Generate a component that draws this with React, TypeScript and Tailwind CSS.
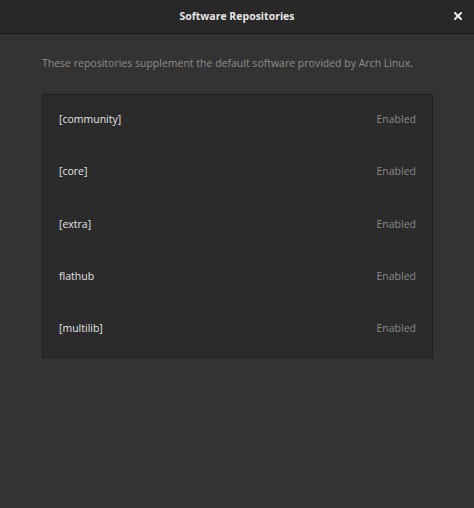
const repos = ["[community]", "[core]", "[extra]", "flathub", "[multilib]"]

export default function App() {
  return (
    <div
      className="w-[474px] h-[508px] bg-[#333333] flex flex-col"
      style={{ fontFamily: '"Open Sans", "Noto Sans", sans-serif' }}
    >
      <div className="h-[34px] shrink-0 bg-[#282828] border-b border-[#1a1a1a] flex items-center justify-center relative">
        <span className="text-[10.5px] font-bold text-[#e6e6e6]">Software Repositories</span>
        <svg className="absolute left-[454px] top-[12px]" width="8" height="8" viewBox="0 0 8 8">
          <path d="M1 1L7 7M7 1L1 7" stroke="#ececec" strokeWidth="2" strokeLinecap="square" />
        </svg>
      </div>
      <div className="px-[42px] pt-[21px]">
        <p className="text-[10.5px] leading-[16px] text-[#8e8e8e] whitespace-nowrap">
          These repositories supplement the default software provided by Arch Linux.
        </p>
        <div className="mt-[23px] w-[391px] bg-[#2b2b2b] border border-[#1f1f1f] flex flex-col">
          {repos.map((r) => (
            <div key={r} className="h-[52.4px] flex items-center justify-between pl-[16px] pr-[16px] pb-[3px]">
              <span className="text-[10.5px] text-[#e3e3e3]">{r}</span>
              <span className="text-[10.5px] text-[#8a8a8a]">Enabled</span>
            </div>
          ))}
        </div>
      </div>
    </div>
  )
}
